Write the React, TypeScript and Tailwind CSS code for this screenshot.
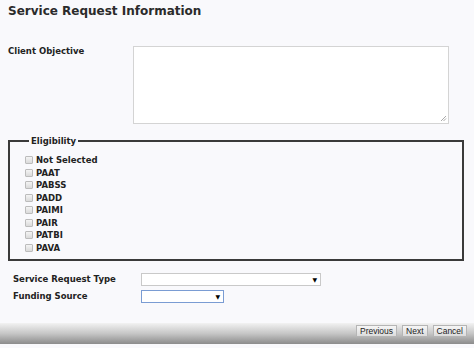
import React from 'react';

const programs = ['Not Selected', 'PAAT', 'PABSS', 'PADD', 'PAIMI', 'PAIR', 'PATBI', 'PAVA'];

const Box: React.FC = () => (
    <span className="inline-block w-[8px] h-[8px] mr-[3px] border border-[#bcbcbc] bg-gradient-to-b from-[#f4f4f4] to-[#dadada] rounded-[1px] shrink-0" />
);

const Select: React.FC<{ width: string; focused?: boolean }> = ({ width, focused }) => (
    <div
        className={`${width} h-[13px] bg-white border ${focused ? 'border-[#7a9cd3]' : 'border-[#c9c9c9]'} flex items-center justify-end pr-[3px]`}
    >
        <span className="text-[6px] leading-none text-black">▼</span>
    </div>
);

const FooterButton: React.FC<{ children: React.ReactNode }> = ({ children }) => (
    <button className="h-[12px] px-[3px] bg-gradient-to-b from-[#f6f6f6] to-[#dcdcdc] border border-[#b5b5b5] text-[8.5px] leading-[10px] text-[#222]">
        {children}
    </button>
);

export default function App() {
    return (
        <div className="w-[474px] h-[348px] bg-[#f9f9fc] font-['DejaVu_Sans',Verdana,sans-serif] text-[#222] overflow-hidden flex flex-col">
            <h1 className="pl-[8px] pt-[3px] h-[24px] text-[12px] font-bold text-[#2b2b2b] leading-[16px]">
                Service Request Information
            </h1>

            <div className="flex mt-[22px] pl-[8px]">
                <div className="w-[125px] text-[8.5px] font-bold leading-[11px] pt-[0px]">Client Objective</div>
                <div className="w-[316px] h-[78px] bg-white border border-[#d4d4d4] relative">
                    <svg className="absolute right-[1px] bottom-[1px]" width="7" height="7" viewBox="0 0 7 7">
                        <path d="M6 1 L1 6 M6 3.5 L3.5 6" stroke="#aaa" strokeWidth="1" />
                    </svg>
                </div>
            </div>

            <fieldset className="mt-[11px] ml-[8px] mr-[10px] h-[126px] border-2 border-[#3a3a3a] pl-[15px] pr-[10px] pb-[4px]">
                <legend className="px-[2px] text-[8.5px] font-bold leading-[12px] text-[#222] ml-[4px]">Eligibility</legend>
                <div className="flex flex-col pt-[7px]">
                    {programs.map((p) => (
                        <label key={p} className="flex items-center h-[12.5px] text-[8.5px] font-bold leading-[12px]">
                            <Box />
                            {p}
                        </label>
                    ))}
                </div>
            </fieldset>

            <div className="mt-[12px] pl-[13px] flex flex-col gap-[4px]">
                <div className="flex items-center h-[13px]">
                    <div className="w-[128px] text-[8.5px] font-bold leading-[13px]">Service Request Type</div>
                    <Select width="w-[180px]" />
                </div>
                <div className="flex items-center h-[13px]">
                    <div className="w-[128px] text-[8.5px] font-bold leading-[13px]">Funding Source</div>
                    <Select width="w-[83px]" focused />
                </div>
            </div>

            <div className="mt-[20px] h-[21px] bg-gradient-to-b from-[#f2f2f2] via-[#c6c6c6] to-[#8c8c8c] flex items-start justify-end gap-[5px] pr-[7px] pt-[2px] font-['Liberation_Sans',Arial,sans-serif]">
                <FooterButton>Previous</FooterButton>
                <FooterButton>Next</FooterButton>
                <FooterButton>Cancel</FooterButton>
            </div>
        </div>
    );
}
